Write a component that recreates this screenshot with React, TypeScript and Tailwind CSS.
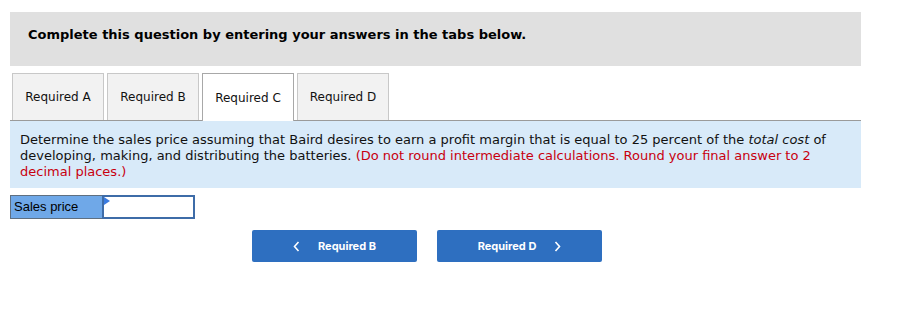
import React from "react";

const tabs = ["Required A", "Required B", "Required C", "Required D"];

export default function App() {
  return (
    <div className="w-[905px] h-[317px] bg-white pl-[10px] pt-[12px]" style={{ fontFamily: '"DejaVu Sans", Verdana, sans-serif' }}>
      <div className="w-[851px]">
        <div className="h-[54px] bg-[#e0e0e0] pl-[18px] pt-[13px] text-[13px] font-bold text-black">
          Complete this question by entering your answers in the tabs below.
        </div>
        <div className="mt-[7px] flex h-[48px] items-end border-b border-[#9a9a9a] pl-[2px]">
          {tabs.map((t, i) => {
            const active = i === 2;
            return (
              <div
                key={t}
                className={
                  active
                    ? "relative mr-[3px] -mb-px flex h-[48px] w-[92px] items-center justify-center border border-b-0 border-[#a8a8a8] bg-white pt-px text-[12px] text-[#111]"
                    : "mr-[3px] flex h-[47px] w-[92px] items-center justify-center border border-b-0 border-[#c8c8c8] bg-[#f2f2f2] text-[12px] text-[#111]"
                }
              >
                {t}
              </div>
            );
          })}
        </div>
        <div className="h-[67px] bg-[#d8eaf9] px-[10px] pt-[11px] text-[13px] leading-[16px] text-[#111]">
          Determine the sales price assuming that Baird desires to earn a profit margin that is equal to 25 percent of the <i>total cost</i> of developing, making, and distributing the batteries.{" "}
          <span className="text-[#c8000f]">(Do not round intermediate calculations. Round your final answer to 2 decimal places.)</span>
        </div>
        <div className="mt-[7px] flex h-[24px] w-[185px]">
          <div className="flex w-[92px] items-center border border-r-0 border-[#5f6f80] bg-[#6fa8e8] pl-[3px] text-[13px] text-black" style={{ fontFamily: '"Liberation Sans", Arial, sans-serif' }}>
            Sales price
          </div>
          <div className="relative w-[93px] border-2 border-[#3e6ca8] bg-white">
            <svg className="absolute left-0 top-0" width="6" height="8" viewBox="0 0 6 8">
              <path d="M0 0 L6 4 L0 8 Z" fill="#3a7be0" />
            </svg>
          </div>
        </div>
        <div className="mt-[11px] flex gap-[20px] pl-[242px]" style={{ fontFamily: 'Inter, Roboto, sans-serif' }}>
          <button className="flex h-[32px] w-[165px] items-center justify-center gap-[18px] rounded-[2px] bg-[#2e6fc0] text-[11px] font-bold text-white">
            <svg width="7" height="11" viewBox="0 0 7 11"><path d="M5.5 1 L1.5 5.5 L5.5 10" stroke="white" strokeWidth="1.6" fill="none" /></svg>
            <span>Required B</span>
          </button>
          <button className="flex h-[32px] w-[165px] items-center justify-center gap-[18px] rounded-[2px] bg-[#2e6fc0] text-[11px] font-bold text-white">
            <span>Required D</span>
            <svg width="7" height="11" viewBox="0 0 7 11"><path d="M1.5 1 L5.5 5.5 L1.5 10" stroke="white" strokeWidth="1.6" fill="none" /></svg>
          </button>
        </div>
      </div>
    </div>
  );
}
